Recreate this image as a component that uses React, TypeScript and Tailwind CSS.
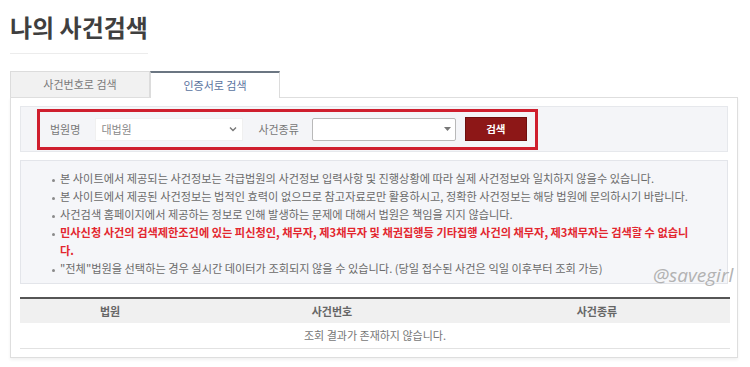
import React from 'react';

const notices = [
  '본 사이트에서 제공되는 사건정보는 각급법원의 사건정보 입력사항 및 진행상황에 따라 실제 사건정보와 일치하지 않을수 있습니다.',
  '본 사이트에서 제공된 사건정보는 법적인 효력이 없으므로 참고자료로만 활용하시고, 정확한 사건정보는 해당 법원에 문의하시기 바랍니다.',
  '사건검색 홈페이지에서 제공하는 정보로 인해 발생하는 문제에 대해서 법원은 책임을 지지 않습니다.',
];

const Bullet: React.FC<{ children: React.ReactNode; red?: boolean }> = ({ children, red }) => (
  <li className="flex">
    <span className="mt-[10px] mr-[5px] h-[3px] w-[3px] shrink-0 rounded-full bg-[#8a8a8a]" />
    <span className={red ? 'font-bold text-[#e3262f]' : ''}>{children}</span>
  </li>
);

export default function App() {
  return (
    <div
      className="relative h-[367px] w-[750px] overflow-hidden bg-white text-[#6a6a6a]"
      style={{ fontFamily: '"Noto Sans CJK KR", "Noto Sans", sans-serif' }}
    >
      <div className="ml-[10px] w-[138px] border-b border-[#ececec] pt-[9px] pb-[8px]">
        <h1 className="text-[24px] leading-[36px] font-bold text-[#3f3f3f]">나의 사건검색</h1>
      </div>

      {/* tabs */}
      <div className="mt-[17px] ml-[10px] flex h-[26px] text-[11px]">
        <div className="flex w-[140px] items-center justify-center border border-b-0 border-[#dcdcdc] bg-[#f1f1f1] text-[#7a7a7a]">
          사건번호로 검색
        </div>
        <div className="relative z-10 -mb-px flex w-[130px] items-center justify-center border-x border-t-2 border-x-[#dcdcdc] border-t-[#6b7682] bg-white text-[#5a73a0]">
          인증서로 검색
        </div>
      </div>

      {/* panel */}
      <div className="ml-[10px] w-[728px] border border-[#dedede] px-[9px] pt-[8px] pb-[8px] shadow-[0_2px_3px_rgba(0,0,0,0.06)]">
        <div className="flex h-[46px] items-center border border-[#e6e8ec] bg-[#f4f5f8] pl-[16px]">
          <div className="flex h-[41px] w-[501px] items-center border-[3px] border-[#cf1f2e] pl-[10px] text-[11px]">
            <span className="text-[#777]">법원명</span>
            <div className="ml-[15px] flex h-[23px] w-[148px] items-center justify-between border border-[#f0f0f0] bg-white pr-[5px] pl-[5px] text-[#8a8a8a]">
              <span>대법원</span>
              <svg width="8" height="6" viewBox="0 0 8 6" fill="none" stroke="#777" strokeWidth="1.4">
                <path d="M1 1.5 4 4.5 7 1.5" />
              </svg>
            </div>
            <span className="ml-[15px] text-[#777]">사건종류</span>
            <div className="ml-[13px] flex h-[23px] w-[144px] items-center justify-end rounded-[2px] border border-[#b9b9b9] bg-white pr-[4px]">
              <svg width="7" height="4" viewBox="0 0 7 4">
                <path d="M0 0h7L3.5 4z" fill="#777" />
              </svg>
            </div>
            <button className="ml-[9px] flex h-[24px] w-[62px] items-center justify-center border border-[#6e0e0e] bg-[#8d1717] text-[10.5px] font-bold text-white">
              검색
            </button>
          </div>
        </div>

        <div className="mt-[8px] border border-[#e3e5ea] bg-[#f5f6f9] pt-[8px] pr-[20px] pb-[6px] pl-[31px] text-[11.2px] leading-[18px]">
          <ul>
            {notices.map((n) => (
              <Bullet key={n}>{n}</Bullet>
            ))}
            <Bullet red>
              민사신청 사건의 검색제한조건에 있는 피신청인, 채무자, 제3채무자 및 채권집행등 기타집행 사건의 채무자, 제3채무자는 검색할 수 없습니
              <br />
              다.
            </Bullet>
            <Bullet>"전체"법원을 선택하는 경우 실시간 데이터가 조회되지 않을 수 있습니다. (당일 접수된 사건은 익일 이후부터 조회 가능)</Bullet>
          </ul>
        </div>

        <table className="mt-[13px] w-[710px] table-fixed border-t-2 border-[#555] text-[11px]">
          <colgroup>
            <col className="w-[180px]" />
            <col className="w-[264px]" />
            <col />
          </colgroup>
          <thead>
            <tr className="h-[25px] bg-[#f0f0f0] text-[#666]">
              <th className="font-bold">법원</th>
              <th className="font-bold">사건번호</th>
              <th className="font-bold">사건종류</th>
            </tr>
          </thead>
          <tbody>
            <tr className="h-[25px] border-b border-[#e2e2e2]">
              <td colSpan={3} className="text-center text-[#777]">
                조회 결과가 존재하지 않습니다.
              </td>
            </tr>
          </tbody>
        </table>
      </div>

      {/* watermark */}
      <div
        className="absolute top-[261px] left-[653px] text-[19px] italic text-[#b2b2b2]"
        style={{ fontFamily: '"Open Sans", "DejaVu Sans", sans-serif' }}
      >
        @savegirl
      </div>
    </div>
  );
}
